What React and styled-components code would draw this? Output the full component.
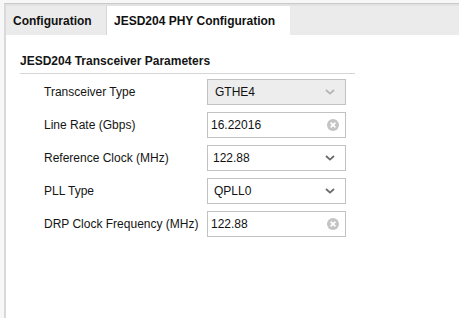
import { Fragment } from "react";
import styled, { createGlobalStyle } from "styled-components";

const GlobalStyle = createGlobalStyle`
  html, body {
    margin: 0;
    padding: 0;
    background: #f7f7f7;
  }
  body {
    font-family: "Liberation Sans", Arial, sans-serif;
    font-size: 12px;
    color: #151515;
  }
`;

const Frame = styled.div`
  padding: 3px 0 0 4px;
  height: 318px;
  box-sizing: border-box;
`;

const Window = styled.div`
  border-top: 1px solid #c9c9c9;
  border-left: 2px solid #d9d9d9;
  height: 100%;
  box-sizing: border-box;
  background: #fff;
  display: flex;
  flex-direction: column;
`;

const TabBar = styled.div`
  display: flex;
  background: #ebebeb;
  border-top: 2px solid #e2e2e2;
  height: 29px;
`;

const Tab = styled.div`
  display: flex;
  align-items: center;
  white-space: nowrap;
  padding-left: ${(p) => (p.active ? "7px" : "7px")};
  font-weight: bold;
  font-size: 12px;
  color: #111;
  background: ${(p) => (p.active ? "#fff" : "transparent")};
  border-left: ${(p) => (p.active ? "1px solid #d6d6d6" : "none")};
  width: ${(p) => p.width};
  box-sizing: border-box;
`;

const Content = styled.div`
  padding: 19px 0 0 14px;
`;

const SectionTitle = styled.div`
  font-weight: bold;
  font-size: 12px;
  line-height: 15px;
  padding-bottom: 4px;
  width: 335px;
  border-bottom: 1px solid #d6d6d6;
`;

const Rows = styled.div`
  display: grid;
  grid-template-columns: 163px 139px;
  grid-auto-rows: 26px;
  row-gap: 7px;
  padding: 5px 0 0 24px;
`;

const Label = styled.div`
  display: flex;
  align-items: center;
  font-size: 12px;
  color: #151515;
`;

const Field = styled.div`
  display: flex;
  align-items: center;
  justify-content: space-between;
  box-sizing: border-box;
  border: 1px solid #c2c2c2;
  background: ${(p) => (p.disabled ? "#ededed" : "#fff")};
  padding: 0 6px 0 ${(p) => p.pad || "6px"};
  font-size: 12px;
  color: #111;
`;

const Chevron = ({ color }) => (
  <svg width="10" height="6" viewBox="0 0 10 6" style={{ marginRight: 4 }}>
    <path d="M1 1 L5 4.6 L9 1" fill="none" stroke={color} strokeWidth="1.8" />
  </svg>
);

const ClearIcon = () => (
  <svg width="12" height="12" viewBox="0 0 12 12">
    <circle cx="6" cy="6" r="6" fill="#c4c4c4" />
    <path d="M3.6 3.6 L8.4 8.4 M8.4 3.6 L3.6 8.4" stroke="#fff" strokeWidth="1.7" />
  </svg>
);

const rows = [
  { label: "Transceiver Type", value: "GTHE4", kind: "select", disabled: true, pad: "7px" },
  { label: "Line Rate (Gbps)", value: "16.22016", kind: "text", pad: "3px" },
  { label: "Reference Clock (MHz)", value: "122.88", kind: "select", pad: "5px" },
  { label: "PLL Type", value: "QPLL0", kind: "select", pad: "6px" },
  { label: "DRP Clock Frequency (MHz)", value: "122.88", kind: "text", pad: "3px" },
];

export default function App() {
  return (
    <>
      <GlobalStyle />
      <Frame>
        <Window>
          <TabBar>
            <Tab width="100px">Configuration</Tab>
            <Tab active width="184px">JESD204 PHY Configuration</Tab>
          </TabBar>
          <Content>
            <SectionTitle>JESD204 Transceiver Parameters</SectionTitle>
            <Rows>
              {rows.map((r) => (
                <Fragment key={r.label}>
                  <Label>{r.label}</Label>
                  <Field disabled={r.disabled} pad={r.pad}>
                    <span>{r.value}</span>
                    {r.kind === "select" ? (
                      <Chevron color={r.disabled ? "#b5b5b5" : "#6a6a6a"} />
                    ) : (
                      <ClearIcon />
                    )}
                  </Field>
                </Fragment>
              ))}
            </Rows>
          </Content>
        </Window>
      </Frame>
    </>
  );
}
